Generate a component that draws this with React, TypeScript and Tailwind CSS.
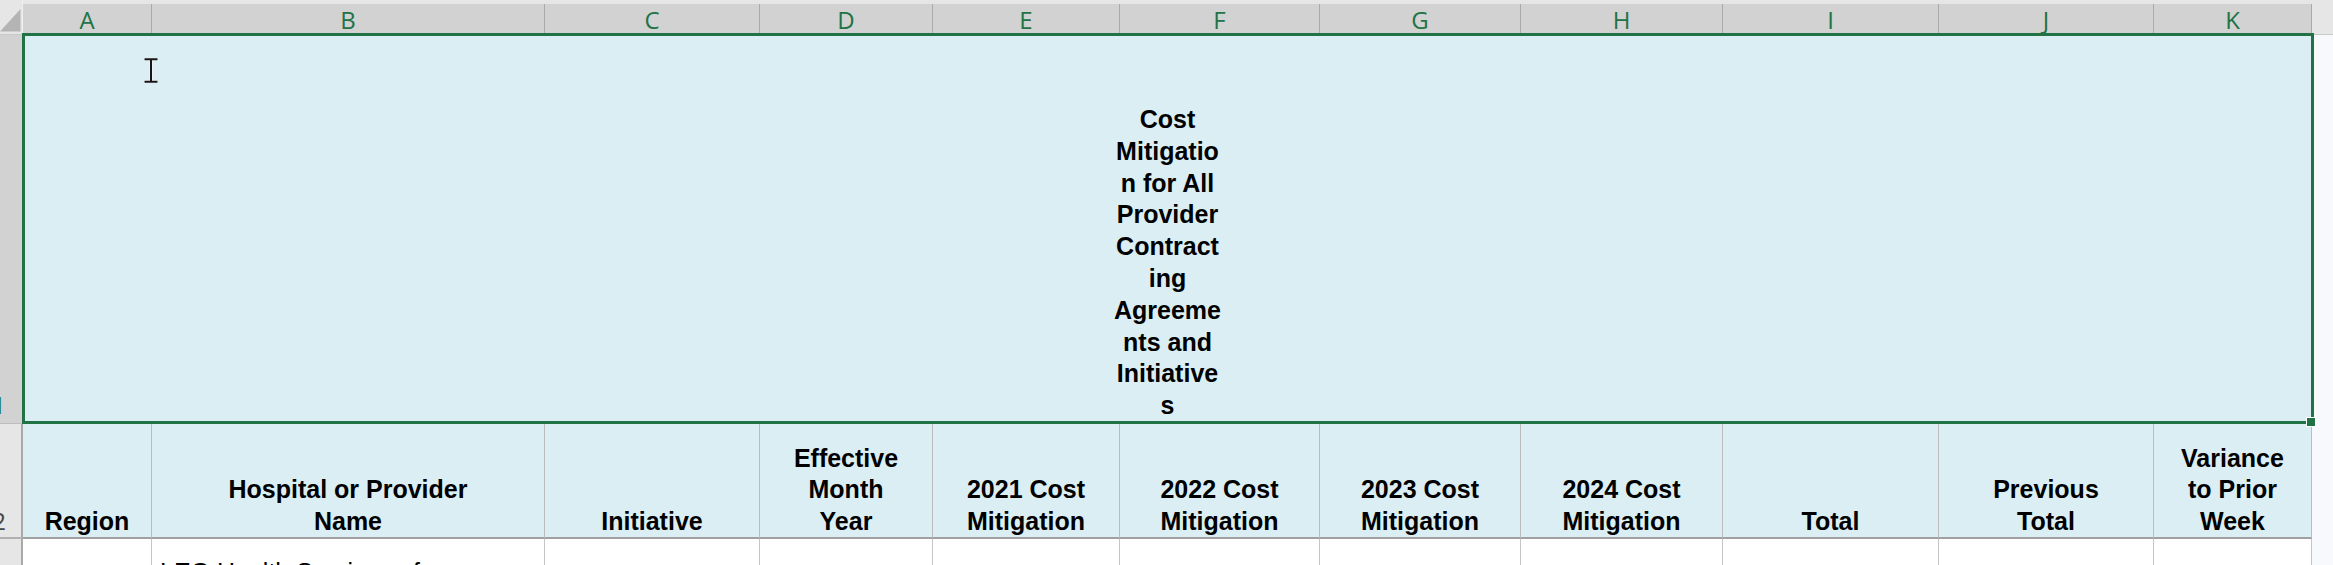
import React from "react";

// Column metadata for the sheet (widths in px at the screenshot's zoom level)
const COLUMNS = [
  { letter: "A", width: "w-[129px]", head: ["Region"] },
  { letter: "B", width: "w-[393px]", head: ["Hospital or Provider", "Name"] },
  { letter: "C", width: "w-[215px]", head: ["Initiative"] },
  { letter: "D", width: "w-[173px]", head: ["Effective", "Month", "Year"] },
  { letter: "E", width: "w-[187px]", head: ["2021 Cost", "Mitigation"] },
  { letter: "F", width: "w-[200px]", head: ["2022 Cost", "Mitigation"] },
  { letter: "G", width: "w-[201px]", head: ["2023 Cost", "Mitigation"] },
  { letter: "H", width: "w-[202px]", head: ["2024 Cost", "Mitigation"] },
  { letter: "I", width: "w-[216px]", head: ["Total"] },
  { letter: "J", width: "w-[215px]", head: ["Previous", "Total"] },
  { letter: "K", width: "w-[158px]", head: ["Variance", "to Prior", "Week"] },
];

const TITLE_LINES = [
  "Cost",
  "Mitigatio",
  "n for All",
  "Provider",
  "Contract",
  "ing",
  "Agreeme",
  "nts and",
  "Initiative",
  "s",
];

const uiFont = "font-['Open_Sans','Noto_Sans',sans-serif]";
const cellFont = "font-['Liberation_Sans',Arial,sans-serif]";

function RowNumber({ n, selected }: { n: number; selected?: boolean }) {
  // Row headers are cropped on the left, so only the right part of the digit shows
  return (
    <div className="w-[46px] -ml-[24px] text-center leading-[28px] text-[24px]">
      <span className={selected ? "text-[#217346]" : "text-[#444444]"}>{n}</span>
    </div>
  );
}

export default function App() {
  return (
    <div className="relative w-[2333px] h-[565px] overflow-hidden bg-[#f8f9fc]">
      {/* Column header strip */}
      <div className={`flex h-[35px] bg-[#e6e6e6] border-b border-[#c8c8c8] ${uiFont}`}>
        <div className="relative w-[23px] h-full border-r border-[#f0f0f0]">
          <svg className="absolute left-0 top-0" width="23" height="33" viewBox="0 0 23 33">
            <polygon points="0,31.5 20.5,31.5 20.5,9" fill="#b4b4b4" />
          </svg>
        </div>
        <div className="flex items-end">
          {COLUMNS.map((c) => (
            <div
              key={c.letter}
              className={`${c.width} h-[30px] pt-[2px] bg-[#d2d2d2] border-r border-[#ababab] text-center text-[24px] leading-[28px] text-[#217346]`}
            >
              {c.letter}
            </div>
          ))}
        </div>
      </div>

      {/* Row 1: merged title cell */}
      <div className="flex h-[389px]">
        <div className="w-[23px] h-full overflow-hidden bg-[#d2d2d2] border-r border-b border-[#bdbdbd] flex items-end pb-[4px]">
          <div className={uiFont}>
            <RowNumber n={1} selected />
          </div>
        </div>
        <div
          className={`w-[2289px] h-full bg-[#daeef3] border-b border-[#c0c0c0] flex flex-col items-center justify-end pb-[1px] ${cellFont} font-bold text-[25px] leading-[31.8px] text-black`}
        >
          {TITLE_LINES.map((line, i) => (
            <div key={i} className="whitespace-nowrap">
              {line}
            </div>
          ))}
        </div>
      </div>

      {/* Row 2: column titles */}
      <div className="flex h-[115px]">
        <div className="w-[23px] h-full overflow-hidden bg-[#e6e6e6] border-r-2 border-b-2 border-r-[#a9a9a9] border-b-[#b0b0b0] flex items-end pb-[2px]">
          <div className={uiFont}>
            <RowNumber n={2} />
          </div>
        </div>
        {COLUMNS.map((c) => (
          <div
            key={c.letter}
            className={`${c.width} h-full bg-[#daeef3] border-r border-b-2 border-r-[#bcbcbc] border-b-[#a0a0a0] flex flex-col items-center justify-end ${cellFont} font-bold text-[25px] leading-[31.8px] text-black`}
          >
            <div className="-mb-[1px] flex flex-col items-center">
              {c.head.map((line) => (
                <div key={line} className="whitespace-nowrap">
                  {line}
                </div>
              ))}
            </div>
          </div>
        ))}
      </div>

      {/* Row 3: first data row, mostly cut off */}
      <div className="flex h-[30px]">
        <div className="w-[23px] h-full bg-[#e6e6e6] border-r-2 border-[#a9a9a9]" />
        {COLUMNS.map((c) => (
          <div key={c.letter} className={`${c.width} h-full bg-white border-r border-[#c6c6c6] overflow-hidden`}>
            {c.letter === "B" && (
              <div className={`pl-[8px] pt-[17px] whitespace-nowrap ${cellFont} text-[25px] leading-[32px] text-black`}>
                LEG Health Services of
              </div>
            )}
          </div>
        ))}
      </div>

      {/* Selection rectangle over the merged cell */}
      <div className="pointer-events-none absolute left-[22px] top-[33px] w-[2292px] h-[391px] border-[3px] border-[#217346]" />
      {/* Fill handle */}
      <div className="pointer-events-none absolute left-[2306px] top-[417px] w-[10px] h-[10px] bg-[#217346] border border-white" />

      {/* Mouse I-beam cursor */}
      <svg className="pointer-events-none absolute left-[144px] top-[58px]" width="14" height="25" viewBox="0 0 14 25">
        <path d="M0 1.2h14M0 23.8h14M7 1v23" stroke="#ffffff" strokeWidth="3.2" opacity="0.5" />
        <path d="M0.5 1.2h13M0.5 23.8h13M7 1v23" stroke="#1b1414" strokeWidth="2" />
      </svg>
    </div>
  );
}
